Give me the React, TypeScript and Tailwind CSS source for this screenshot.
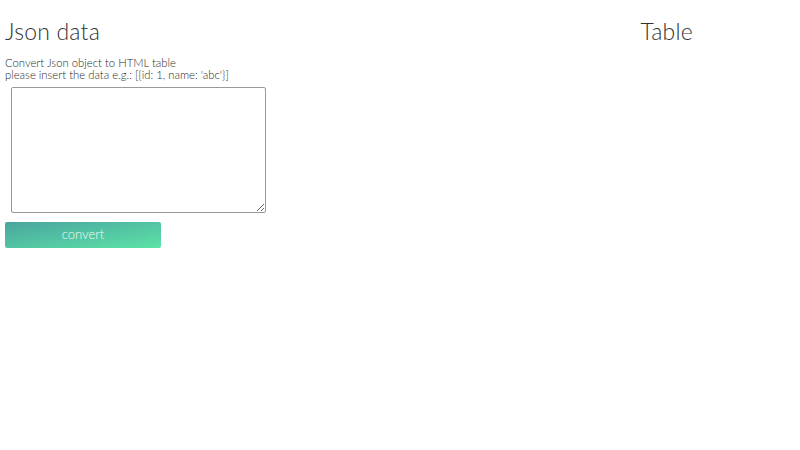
export default function App() {
  return (
    <div className="grid min-h-[450px] grid-cols-3 bg-white font-['Lato',sans-serif] font-light text-[#333]">
      {/* Input side */}
      <div className="col-span-2 px-[5px] pt-[17px]">
        <h1 className="text-[23px] leading-[28px] tracking-[0.2px]">Json data</h1>
        <p className="mt-[12px] text-[11.3px] leading-[12px] font-light text-[#2a2a2a]">
          Convert Json object to HTML table
          <br />
          please insert the data e.g.: [{'{'}id: 1, name: 'abc'{'}'}]
        </p>
        <textarea className="mt-[6px] ml-[6px] block h-[126px] w-[255px] rounded-[2px] border border-[#999] outline-none" />
        <button className="mt-[9px] h-[26px] w-[156px] rounded-[2px] bg-gradient-to-br from-[#4aa59e] to-[#5ce3a6] text-[13px] font-light text-white/90">
          convert
        </button>
      </div>

      {/* Output side */}
      <div className="pt-[17px] text-center">
        <h1 className="text-[23px] leading-[28px] tracking-[0.2px]">Table</h1>
      </div>
    </div>
  )
}
